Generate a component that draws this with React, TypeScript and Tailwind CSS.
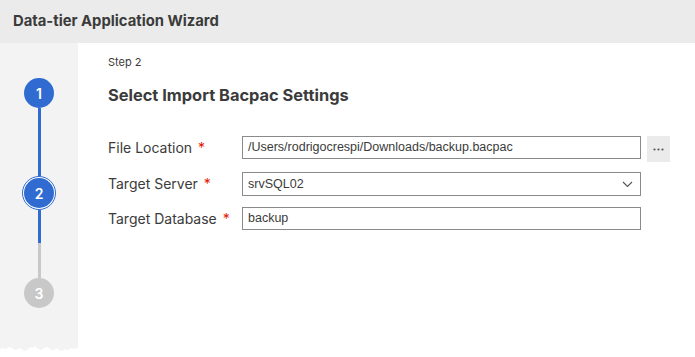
import React from "react";

const font = { fontFamily: "Inter, 'Liberation Sans', Arial, sans-serif" };
const inputFont = { fontFamily: "'Liberation Sans', Arial, sans-serif" };

function Row({ label, children, className = "" }: { label: string; children: React.ReactNode; className?: string }) {
  return (
    <div className={"flex items-start " + className}>
      <div className="w-[134px] h-[23px] flex items-center text-[14px] text-[#3b3b3b] whitespace-nowrap">
        {label}
        <span className="text-[#e51400] ml-[6px]">*</span>
      </div>
      {children}
    </div>
  );
}

export default function App() {
  return (
    <div className="w-[695px] h-[357px] flex flex-col bg-white overflow-hidden" style={font}>
      <div className="h-[43px] bg-[#ebebeb] flex items-center px-[13px] shrink-0">
        <span className="text-[14.8px] font-bold text-[#3b3b3b]">Data-tier Application Wizard</span>
      </div>
      <div className="flex flex-1">
        <div className="w-[78px] bg-[#f3f3f3] relative flex flex-col items-center pt-[35px]">
          <div className="w-[30px] h-[30px] rounded-full bg-[#2f6bd0] text-white text-[14px] font-semibold flex items-center justify-center">1</div>
          <div className="w-[3px] h-[68px] bg-[#2f6bd0]"></div>
          <div className="w-[34px] h-[34px] rounded-full border border-[#2f6bd0] bg-white p-[1px]">
            <div className="w-full h-full rounded-full bg-[#2f6bd0] text-white text-[14px] font-semibold flex items-center justify-center">2</div>
          </div>
          <div className="w-[3px] h-[33px] bg-[#2f6bd0]"></div>
          <div className="w-[3px] h-[35px] bg-[#c8c8c8]"></div>
          <div className="w-[30px] h-[30px] rounded-full bg-[#c8c8c8] text-white text-[14px] font-semibold flex items-center justify-center">3</div>
          <svg className="absolute left-0 bottom-0" width="78" height="14" viewBox="0 0 78 14">
            <polygon
              fill="#ffffff"
              points="0,6 3,5 6,6 9,4 12,5 15,7 18,6 21,5 24,8 27,7 30,4 33,5 35,3 38,6 41,7 44,5 47,4 50,6 53,8 56,5 59,7 62,8 65,6 68,7 71,5 74,6 78,5 78,14 0,14"
            />
          </svg>
        </div>
        <div className="flex-1 pl-[30px] pt-[12px]">
          <div className="text-[11px] leading-[14px] text-[#3b3b3b]">Step 2</div>
          <div className="mt-[16px] text-[16.4px] leading-[20px] font-bold text-[#3b3b3b]">Select Import Bacpac Settings</div>
          <Row label="File Location" className="mt-[31px]">
            <div className="w-[399px] h-[23px] border border-[#8a8a8a] flex items-center px-[5px] text-[12.5px] text-[#3b3b3b]" style={inputFont}>
              /Users/rodrigocrespi/Downloads/backup.bacpac
            </div>
            <div className="ml-[6px] w-[23px] h-[26px] bg-[#ebebeb] flex items-center justify-center">
              <svg width="11" height="3" viewBox="0 0 11 3">
                <circle cx="1.5" cy="1.5" r="1.1" fill="#555" />
                <circle cx="5.5" cy="1.5" r="1.1" fill="#555" />
                <circle cx="9.5" cy="1.5" r="1.1" fill="#555" />
              </svg>
            </div>
          </Row>
          <Row label="Target Server" className="mt-[10px]">
            <div className="w-[399px] h-[24px] border border-[#8a8a8a] flex items-center justify-between pl-[5px] pr-[7px] text-[12.5px] text-[#3b3b3b]" style={inputFont}>
              <span>srvSQL02</span>
              <svg width="11" height="7" viewBox="0 0 11 7">
                <path d="M1 1 L5.5 5.5 L10 1" fill="none" stroke="#555" strokeWidth="1.1" />
              </svg>
            </div>
          </Row>
          <Row label="Target Database" className="mt-[11px]">
            <div className="w-[399px] h-[23px] border border-[#8a8a8a] flex items-center px-[5px] text-[12.5px] text-[#3b3b3b]" style={inputFont}>
              backup
            </div>
          </Row>
        </div>
      </div>
    </div>
  );
}
